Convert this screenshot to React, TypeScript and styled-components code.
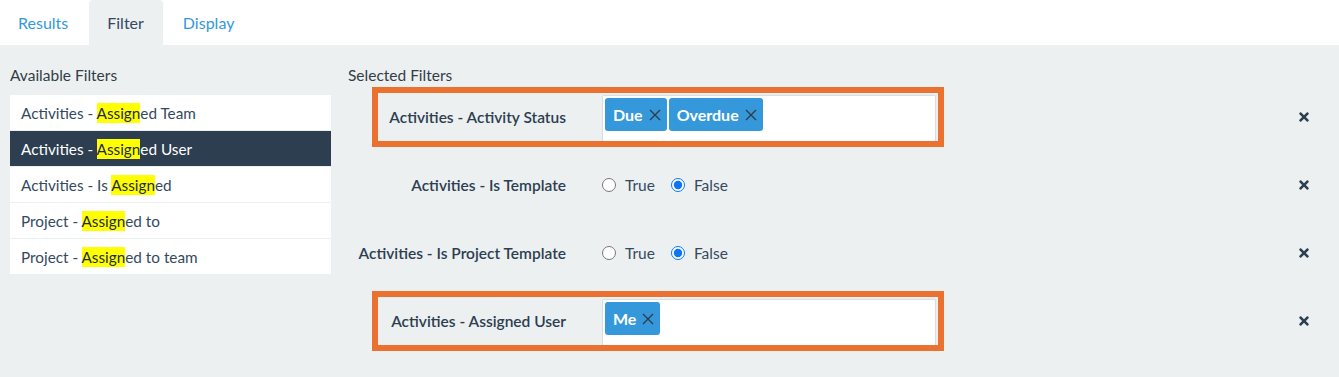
import React from 'react';
import styled, { createGlobalStyle } from 'styled-components';
import { FaTimes } from 'react-icons/fa';

const Global = createGlobalStyle`
	html, body {
		margin: 0;
		padding: 0;
		background: #ffffff;
		font-family: Lato, "Open Sans", sans-serif;
		color: #34495e;
	}
`;

const Page = styled.div`
	width: 1339px;
	height: 377px;
	display: flex;
	flex-direction: column;
	overflow: hidden;
`;

const Tabs = styled.div`
	height: 45px;
	display: flex;
	align-items: stretch;
	background: #ffffff;
`;

const Tab = styled.div<{ $active?: boolean }>`
	display: flex;
	align-items: center;
	padding: 0 19px 0 18px;
	margin-right: 2px;
	font-size: 16px;
	color: ${(p) => (p.$active ? '#34495e' : '#3498db')};
	background: ${(p) => (p.$active ? '#ecf0f1' : 'transparent')};
	border-radius: 4px 4px 0 0;
`;

const Panel = styled.div`
	flex: 1;
	background: #ecf0f1;
	display: grid;
	grid-template-columns: 321px 1fr;
	column-gap: 17px;
	padding: 20px 28px 0 10px;
`;

const Column = styled.div`
	display: flex;
	flex-direction: column;
`;

const Heading = styled.div`
	font-size: 15.5px;
	line-height: 20px;
	color: #333d47;
`;

const List = styled.div`
	margin-top: 10px;
	background: #ffffff;
	display: flex;
	flex-direction: column;
`;

const Item = styled.div<{ $selected?: boolean }>`
	height: 35px;
	display: flex;
	align-items: center;
	padding-left: 11px;
	font-size: 15.3px;
	color: ${(p) => (p.$selected ? '#ffffff' : '#34495e')};
	background: ${(p) => (p.$selected ? '#2c3e50' : '#ffffff')};
	&:not(:last-child) {
		border-bottom: 1px solid #ecf0f1;
	}
`;

const Mark = styled.mark`
	background: #ffff00;
	color: #1f2d3a;
	padding: 1px 0;
`;

const Rows = styled.div`
	margin-top: 2px;
	display: flex;
	flex-direction: column;
	gap: 8px;
`;

const Row = styled.div`
	display: flex;
	align-items: center;
	height: 60px;
`;

const Frame = styled.div<{ $marked?: boolean }>`
	margin-left: 24px;
	width: 560px;
	height: 48px;
	border: 6px solid ${(p) => (p.$marked ? '#ea7130' : 'transparent')};
	display: flex;
	align-items: center;
`;

const Label = styled.div`
	width: 188px;
	flex: none;
	padding-right: 12px;
	display: flex;
	justify-content: flex-end;
	white-space: nowrap;
	font-size: 15.5px;
	font-weight: 600;
	color: #2c3e50;
`;

const TagInput = styled.div`
	margin-left: 24px;
	align-self: flex-start;
	margin-top: 2px;
	width: 334px;
	height: 46px;
	box-sizing: border-box;
	background: #ffffff;
	border: 1px solid #d5dde5;
	border-bottom: none;
	border-radius: 2px 2px 0 0;
	padding: 2px;
	display: flex;
	align-items: flex-start;
	gap: 2px;
`;

const Tag = styled.div`
	height: 33px;
	display: flex;
	align-items: center;
	gap: 6px;
	padding: 0 6px 0 8px;
	background: #3498db;
	border-radius: 3px;
	color: #ffffff;
	font-size: 16px;
	font-weight: 700;
`;

const TagClose = styled.svg`
	width: 12px;
	height: 12px;
	stroke: #2f3b46;
	stroke-width: 1.3;
	fill: none;
`;

const Radios = styled.div`
	margin-left: 24px;
	display: flex;
	align-items: center;
	font-size: 15.5px;
	color: #34495e;
`;

const RadioLabel = styled.label`
	display: flex;
	align-items: center;
	gap: 9px;
	margin-right: 16px;
`;

const Radio = styled.input`
	margin: 0;
	width: 14px;
	height: 14px;
	accent-color: #0b75f3;
`;

const Remove = styled.div`
	margin-left: auto;
	display: flex;
	color: #2c3e50;
	font-size: 14px;
`;

const available = [
	{ pre: 'Activities - ', post: 'ed Team' },
	{ pre: 'Activities - ', post: 'ed User', selected: true },
	{ pre: 'Activities - Is ', post: 'ed' },
	{ pre: 'Project - ', post: 'ed to' },
	{ pre: 'Project - ', post: 'ed to team' },
];

type Filter =
	| { label: string; kind: 'tags'; tags: string[] }
	| { label: string; kind: 'bool'; value: boolean };

const selected: Filter[] = [
	{ label: 'Activities - Activity Status', kind: 'tags', tags: ['Due', 'Overdue'] },
	{ label: 'Activities - Is Template', kind: 'bool', value: false },
	{ label: 'Activities - Is Project Template', kind: 'bool', value: false },
	{ label: 'Activities - Assigned User', kind: 'tags', tags: ['Me'] },
];

function App() {
	return (
		<Page>
			<Global />
			<Tabs>
				<Tab>Results</Tab>
				<Tab $active>Filter</Tab>
				<Tab>Display</Tab>
			</Tabs>
			<Panel>
				<Column>
					<Heading>Available Filters</Heading>
					<List>
						{available.map((a, i) => (
							<Item key={i} $selected={a.selected}>
								<span>
									{a.pre}
									<Mark>Assign</Mark>
									{a.post}
								</span>
							</Item>
						))}
					</List>
				</Column>
				<Column>
					<Heading>Selected Filters</Heading>
					<Rows>
						{selected.map((f, i) => (
							<Row key={i}>
								<Frame $marked={f.kind === 'tags'}>
									<Label>{f.label}</Label>
									{f.kind === 'tags' ? (
										<TagInput>
											{f.tags.map((t) => (
												<Tag key={t}>
													{t}
													<TagClose viewBox="0 0 12 12">
														<path d="M1 1L11 11M11 1L1 11" />
													</TagClose>
												</Tag>
											))}
										</TagInput>
									) : (
										<Radios>
											<RadioLabel>
												<Radio type="radio" name={`r${i}`} defaultChecked={f.value} />
												True
											</RadioLabel>
											<RadioLabel>
												<Radio type="radio" name={`r${i}`} defaultChecked={!f.value} />
												False
											</RadioLabel>
										</Radios>
									)}
								</Frame>
								<Remove>
									<FaTimes />
								</Remove>
							</Row>
						))}
					</Rows>
				</Column>
			</Panel>
		</Page>
	);
}

export default App;
